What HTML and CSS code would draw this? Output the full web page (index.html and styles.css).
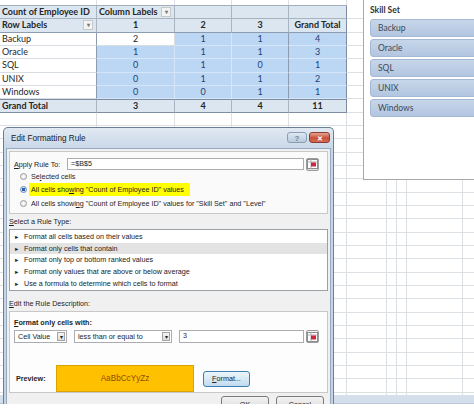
FILE: index.html
```html
<!DOCTYPE html>
<html lang="en">
<head>
    <meta charset="UTF-8">
    <title>Edit Formatting Rule</title>
    <link rel="stylesheet" href="styles.css">
</head>
<body>
    <div class="sheet">
        <!-- pivot table -->
        <div class="pivot">
            <div class="c hd b">Count of Employee ID</div>
            <div class="c hd b dd">Column Labels <span class="arrow">&#9662;</span></div>
            <div class="c hd"></div>
            <div class="c hd"></div>
            <div class="c hd edge"></div>

            <div class="c hd b dd sep">Row Labels <span class="arrow">&#9662;</span></div>
            <div class="c hd b n sep">1</div>
            <div class="c hd b n sep">2</div>
            <div class="c hd b n sep">3</div>
            <div class="c hd b n sep edge">Grand Total</div>

            <div class="c lbl">Backup</div>
            <div class="c n act">2</div>
            <div class="c n sel">1</div>
            <div class="c n sel gl">1</div>
            <div class="c n sel edge">4</div>

            <div class="c lbl">Oracle</div>
            <div class="c n sel">1</div>
            <div class="c n sel">1</div>
            <div class="c n sel gl">1</div>
            <div class="c n sel edge">3</div>

            <div class="c lbl">SQL</div>
            <div class="c n sel">0</div>
            <div class="c n sel">1</div>
            <div class="c n sel gl">0</div>
            <div class="c n sel edge">1</div>

            <div class="c lbl">UNIX</div>
            <div class="c n sel">0</div>
            <div class="c n sel">1</div>
            <div class="c n sel gl">1</div>
            <div class="c n sel edge">2</div>

            <div class="c lbl">Windows</div>
            <div class="c n sel">0</div>
            <div class="c n sel">0</div>
            <div class="c n sel gl">1</div>
            <div class="c n sel edge">1</div>

            <div class="c hd b tot">Grand Total</div>
            <div class="c hd b n tot">3</div>
            <div class="c hd b n tot">4</div>
            <div class="c hd b n tot">4</div>
            <div class="c hd b n tot edge">11</div>
        </div>

        <!-- slicer -->
        <div class="slicer">
            <div class="slicer-title">Skill Set</div>
            <div class="slicer-item">Backup</div>
            <div class="slicer-item">Oracle</div>
            <div class="slicer-item">SQL</div>
            <div class="slicer-item">UNIX</div>
            <div class="slicer-item">Windows</div>
        </div>

        <!-- dialog -->
        <div class="dialog">
            <div class="titlebar">
                <span class="title">Edit Formatting Rule</span>
                <div class="caption-btns">
                    <span class="cap-help">?</span>
                    <span class="cap-close">&#10005;</span>
                </div>
            </div>
            <div class="dlg-body">
                <div class="panel apply">
                    <div class="apply-row">
                        <span class="apply-label"><u>A</u>pply Rule To:</span>
                        <span class="input wide">=$B$5</span>
                        <span class="ref-btn">
                            <svg width="11" height="10" viewBox="0 0 11 10">
                                <rect x="0.5" y="0.5" width="10" height="9" fill="#fff" stroke="#8d8d8d"/>
                                <line x1="0.5" y1="3" x2="10.5" y2="3" stroke="#b0b0b0"/>
                                <line x1="4" y1="0.5" x2="4" y2="9.5" stroke="#b0b0b0"/>
                                <rect x="4" y="3.5" width="5" height="4" fill="#d2243f"/>
                            </svg>
                        </span>
                    </div>
                    <div class="radio-row"><span class="radio"></span><span>Se<u>l</u>ected cells</span></div>
                    <div class="radio-row"><span class="radio on"></span><span class="hilite">All cells sho<u>w</u>ing "Count of Employee ID" values</span></div>
                    <div class="radio-row"><span class="radio"></span><span>All cells showi<u>n</u>g "Count of Employee ID" values for "Skill Set" and "Level"</span></div>
                </div>

                <div class="section-label"><u>S</u>elect a Rule Type:</div>
                <div class="rule-list">
                    <div class="rule"><span class="tri">&#9658;</span>Format all cells based on their values</div>
                    <div class="rule current"><span class="tri">&#9658;</span>Format only cells that contain</div>
                    <div class="rule"><span class="tri">&#9658;</span>Format only top or bottom ranked values</div>
                    <div class="rule"><span class="tri">&#9658;</span>Format only values that are above or below average</div>
                    <div class="rule"><span class="tri">&#9658;</span>Use a formula to determine which cells to format</div>
                </div>

                <div class="section-label gap"><u>E</u>dit the Rule Description:</div>
                <div class="panel desc">
                    <div class="desc-title"><u>F</u>ormat only cells with:</div>
                    <div class="ctrl-row">
                        <span class="select sel-a">Cell Value<span class="drop">&#9662;</span></span>
                        <span class="select sel-b">less than or equal to<span class="drop">&#9662;</span></span>
                        <span class="input val">3</span>
                        <span class="ref-btn">
                            <svg width="11" height="10" viewBox="0 0 11 10">
                                <rect x="0.5" y="0.5" width="10" height="9" fill="#fff" stroke="#8d8d8d"/>
                                <line x1="0.5" y1="3" x2="10.5" y2="3" stroke="#b0b0b0"/>
                                <line x1="4" y1="0.5" x2="4" y2="9.5" stroke="#b0b0b0"/>
                                <rect x="4" y="3.5" width="5" height="4" fill="#d2243f"/>
                            </svg>
                        </span>
                    </div>
                    <div class="preview-row">
                        <span class="preview-label">Preview:</span>
                        <span class="preview-box">AaBbCcYyZz</span>
                        <span class="btn format-btn"><u>F</u>ormat...</span>
                    </div>
                </div>

                <div class="btn-row">
                    <span class="btn">OK</span>
                    <span class="btn">Cancel</span>
                </div>
            </div>
        </div>
    </div>
    <div class="tabs"></div>
</body>
</html>
```

FILE: styles.css
```css
body {
    margin: 0;
    background: #fff;
    font-family: 'Lato', 'Liberation Sans', sans-serif;
    color: #222;
    overflow: hidden;
}

/* worksheet with gridlines */
.sheet {
    position: relative;
    height: 390px;
    padding-top: 5px;
    background:
        linear-gradient(#dcdfe3, #dcdfe3) 96px 0 / 1px 100% no-repeat,
        linear-gradient(#dcdfe3, #dcdfe3) 174px 0 / 1px 100% no-repeat,
        linear-gradient(#dcdfe3, #dcdfe3) 231px 0 / 1px 100% no-repeat,
        linear-gradient(#dcdfe3, #dcdfe3) 288px 0 / 1px 100% no-repeat,
        linear-gradient(#dcdfe3, #dcdfe3) 346px 0 / 1px 100% no-repeat,
        linear-gradient(#dcdfe3, #dcdfe3) 386px 0 / 1px 100% no-repeat,
        linear-gradient(#dcdfe3, #dcdfe3) 396px 0 / 1px 100% no-repeat,
        linear-gradient(#dcdfe3, #dcdfe3) 406px 0 / 1px 100% no-repeat,
        linear-gradient(#dcdfe3, #dcdfe3) 462px 0 / 1px 100% no-repeat,
        repeating-linear-gradient(to bottom, transparent 0 12.333px, #dcdfe3 12.333px 13.333px) 0 6px;
}

.tabs {
    height: 8px;
    background: #d5dfeb;
    border-bottom: 1px solid #b9c7d7;
}

/* pivot table */
.pivot {
    display: grid;
    grid-template-columns: 97px 78px 57px 57px 58px;
    grid-auto-rows: 13.333px;
    width: 347px;
    border-top: 1px solid #a3afbe;
    font-size: 9px;
}

.c {
    box-sizing: border-box;
    border-right: 1px solid #d8dde4;
    border-bottom: 1px solid #d8dde4;
    padding: 0 2px;
    line-height: 12px;
    white-space: nowrap;
    overflow: hidden;
    color: #262626;
}

.hd {
    background: #dce6f1;
    border-color: #a9b4c2;
}

.b {
    font-weight: bold;
}

.n {
    text-align: center;
}

.dd {
    display: flex;
    justify-content: space-between;
    align-items: center;
}

.arrow {
    width: 8px;
    height: 8px;
    line-height: 8px;
    font-size: 6px;
    text-align: center;
    color: #777;
    background: #f4f4f4;
    border: 1px solid #c9c9c9;
    margin-right: 1px;
}

.sep {
    border-bottom-color: #8d9bb0;
}

.lbl {
    background: #fff;
    border-right-color: #8d9bb0;
}

.act {
    background: #fff;
}

.sel {
    background: #bcd7f3;
    color: #22407a;
    border-color: #d6e6f8;
}

.gl {
    border-right-color: #8d9bb0;
}

.edge {
    border-right-color: #7f8da3;
}

.tot {
    border-top: 1px solid #7f8da3;
    border-bottom-color: #7f8da3;
    line-height: 11px;
}

/* slicer */
.slicer {
    position: absolute;
    left: 363px;
    top: -1px;
    width: 120px;
    height: 181px;
    box-sizing: border-box;
    background: #fff;
    border: 1px solid #a8a8a8;
    padding: 3px 0 0 6px;
    font-size: 8.5px;
}

.slicer-title {
    font-weight: bold;
    height: 16px;
    line-height: 14px;
    color: #333;
}

.slicer-item {
    height: 18px;
    line-height: 17px;
    margin-bottom: 2px;
    padding-left: 7px;
    box-sizing: border-box;
    background: linear-gradient(#c6d6ea, #b3c6e0);
    border: 1px solid #a6b9d4;
    border-radius: 3px;
    color: #3d4856;
}

/* dialog */
.dialog {
    position: absolute;
    left: 3px;
    top: 127px;
    width: 331px;
    height: 285px;
    overflow: hidden;
    box-sizing: border-box;
    border: 1px solid #6b7f94;
    border-bottom: none;
    border-radius: 5px 5px 0 0;
    padding: 0 3px;
    background: linear-gradient(#e1e9f3, #c9d8e9 20px, #c3d3e5);
    font-family: 'Liberation Sans', Arial, sans-serif;
    font-size: 7.2px;
    color: #1e1e1e;
}

.titlebar {
    height: 20px;
    display: flex;
    align-items: center;
    justify-content: space-between;
}

.title {
    font-size: 8.2px;
    padding-left: 4px;
    color: #1a1a1a;
}

.caption-btns {
    display: flex;
    gap: 2px;
    align-self: flex-start;
    margin-top: 4px;
}

.cap-help,
.cap-close {
    height: 11px;
    line-height: 11px;
    text-align: center;
    border: 1px solid #8b9db3;
    border-radius: 3px;
    box-sizing: border-box;
}

.cap-help {
    width: 20px;
    background: linear-gradient(#dfe8f3, #b9cadf);
    color: #6d7f96;
    font-size: 8px;
    font-weight: bold;
}

.cap-close {
    width: 21px;
    background: linear-gradient(#e6a495, #c8513a 55%, #d06a55);
    border-color: #8c3b2e;
    color: #fff;
    font-size: 7px;
    font-weight: bold;
}

.dlg-body {
    background: #f0f0f0;
    height: 280px;
    padding: 2px 2px 0;
    border: 1px solid #97a9be;
    border-bottom: none;
    margin: 0 -1px;
}

.panel {
    background: #fafafa;
    border: 1px solid #c8c8c8;
}

.apply {
    height: 63px;
    box-sizing: border-box;
    padding: 6px 6px 0 4px;
}

.apply-row {
    display: flex;
    align-items: center;
    height: 12px;
}

.apply-label {
    width: 53px;
}

.input {
    box-sizing: border-box;
    height: 12px;
    line-height: 10px;
    background: #fff;
    border: 1px solid #abadb3;
    padding-left: 3px;
}

.wide {
    width: 237px;
}

.ref-btn {
    width: 13px;
    height: 13px;
    margin-left: 2px;
    display: flex;
    align-items: center;
    justify-content: center;
    box-sizing: border-box;
    background: linear-gradient(#f6f6f6, #dedede);
    border: 1px solid #9a9a9a;
    border-radius: 2px;
}

.radio-row {
    display: flex;
    align-items: center;
    height: 13.3px;
    padding-left: 6px;
}

.radio-row:first-of-type {
    margin-top: 1px;
}

.radio {
    width: 7px;
    height: 7px;
    box-sizing: border-box;
    border: 1px solid #9a9a9a;
    border-radius: 50%;
    background: radial-gradient(#ffffff, #e0e0e0);
    margin-right: 4px;
    flex-shrink: 0;
}

.radio.on {
    background: radial-gradient(#2b5fa8 0 1.6px, #d8e4f2 2px);
    border-color: #6d8bb3;
}

.hilite {
    background: #ffff00;
    line-height: 13px;
    padding: 0 6px 0 2px;
    margin-left: -2px;
}

.section-label {
    height: 14px;
    line-height: 14px;
    margin-top: 1px;
}

.section-label.gap {
    margin-top: 6px;
}

.rule-list {
    height: 62px;
    box-sizing: border-box;
    background: #fff;
    border: 1px solid #9aa0a8;
    padding-top: 1px;
}

.rule {
    height: 11.7px;
    line-height: 11.7px;
    padding-left: 4px;
    color: #222;
}

.rule.current {
    background: #e3e3e3;
}

.tri {
    font-size: 5.5px;
    display: inline-block;
    width: 10px;
    color: #222;
}

.desc {
    height: 82px;
    box-sizing: border-box;
    padding: 4px 6px 0 4px;
    background: #fdfdfd;
}

.desc-title {
    font-weight: bold;
    height: 13px;
    line-height: 13px;
}

.ctrl-row {
    display: flex;
    align-items: center;
    height: 13px;
    margin-top: 1px;
}

.select {
    box-sizing: border-box;
    height: 13px;
    line-height: 11px;
    background: #fff;
    border: 1px solid #abadb3;
    padding-left: 3px;
    display: flex;
    justify-content: space-between;
}

.drop {
    width: 8px;
    height: 9px;
    margin: 1px;
    line-height: 9px;
    text-align: center;
    font-size: 6px;
    background: linear-gradient(#f4f4f4, #dcdcdc);
    border: 1px solid #a5a5a5;
    box-sizing: border-box;
    color: #222;
}

.sel-a {
    width: 53px;
    margin-right: 7px;
}

.sel-b {
    width: 98px;
    margin-right: 7px;
}

.val {
    width: 125px;
    height: 13px;
}

.preview-row {
    display: flex;
    align-items: center;
    margin-top: 22px;
    height: 27px;
}

.preview-label {
    width: 40px;
    margin-left: 2px;
    font-weight: bold;
}

.preview-box {
    width: 138px;
    height: 27px;
    box-sizing: border-box;
    background: #ffc000;
    border: 1px solid #d9a400;
    color: #8f4f00;
    font-size: 8.2px;
    display: flex;
    align-items: center;
    justify-content: center;
}

.btn {
    box-sizing: border-box;
    display: flex;
    align-items: center;
    justify-content: center;
    background: linear-gradient(#f3f3f3, #e4e4e4 50%, #d6d6d6);
    border: 1px solid #7a7a7a;
    border-radius: 3px;
    color: #222;
}

.format-btn {
    width: 47px;
    height: 16px;
    margin-left: 9px;
    border-color: #3c7fb1;
    background: linear-gradient(#eef6fb, #d6e9f5 50%, #c1dcee);
}

.btn-row {
    display: flex;
    justify-content: flex-end;
    gap: 7px;
    margin-top: 3px;
    padding-right: 4px;
}

.btn-row .btn {
    width: 48px;
    height: 18px;
    align-items: flex-start;
    padding-top: 4px;
    line-height: 8px;
}
```
